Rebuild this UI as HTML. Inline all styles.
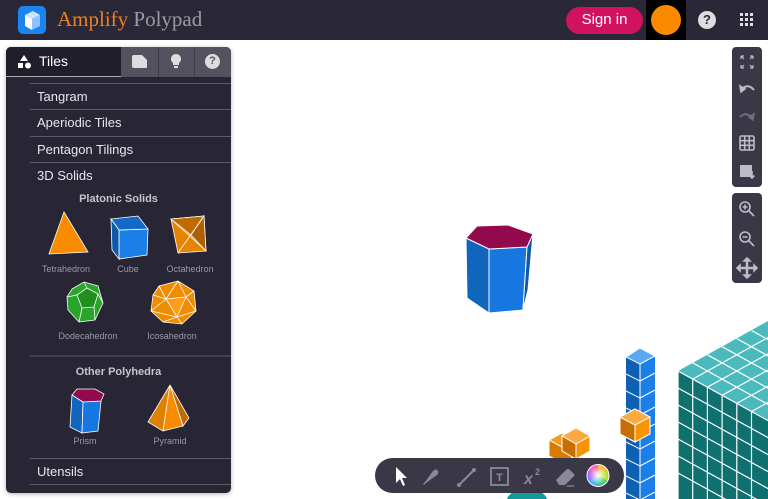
<!DOCTYPE html>
<html><head><meta charset="utf-8"><style>
*{margin:0;padding:0;box-sizing:border-box}
body{width:768px;height:499px;overflow:hidden;background:#fff;font-family:"Liberation Sans",sans-serif;position:relative}
.hdr{position:absolute;left:0;top:0;width:768px;height:40px;background:#2a2837}
.panel{position:absolute;left:6px;top:47px;width:225px;height:446px;background:#282635;border-radius:5px;overflow:hidden;box-shadow:0 1px 4px rgba(0,0,0,.3)}
.item{position:absolute;left:24px;width:201px;border-top:1px solid #5d5b6a;color:#e6e6ea;font-size:13px;padding-left:7px;height:26px;line-height:25px}
.lbl{position:absolute;color:#9a99a5;font-size:9px;text-align:center;width:80px}
.sub{position:absolute;color:#c6c5cc;font-size:11px;font-weight:bold;width:225px;text-align:center}
.tb{position:absolute;left:732px;width:30px;background:#3a3847;border-radius:4px}
</style></head><body>
<div class="hdr">
 <svg style="position:absolute;left:18px;top:6px" width="28" height="28" viewBox="0 0 28 28"><rect width="28" height="28" rx="5" fill="#1a84f0"/><path d="M7 9 L15 5 L22 9 L14 13Z" fill="#cfe3ff"/><path d="M7 9 L14 13 L14 24 L7 20Z" fill="#ffffff"/><path d="M14 13 L22 9 L22 20 L14 24Z" fill="#8fc2ff"/></svg>
 <div style="position:absolute;left:57px;top:7px;font-family:'Liberation Serif',serif;font-size:21px;color:#f07f1c">Amplify <span style="color:#9c9ba3">Polypad</span></div>
 <div style="position:absolute;left:566px;top:7px;width:77px;height:27px;border-radius:14px;background:#d1125f;color:#fff;font-size:15px;text-align:center;line-height:26px">Sign in</div>
 <div style="position:absolute;left:646px;top:0;width:40px;height:40px;background:#000"><div style="position:absolute;left:5px;top:5px;width:30px;height:30px;border-radius:50%;background:#fb8a00"></div></div>
 <div style="position:absolute;left:698px;top:11px;width:18px;height:18px;border-radius:50%;background:#ddd;color:#2a2837;font-weight:bold;font-size:13px;text-align:center;line-height:18px">?</div>
 <svg style="position:absolute;left:740px;top:13px" width="14" height="14"><g fill="#e0e0e0"><rect x="0" y="0" width="3" height="3"/><rect x="5" y="0" width="3" height="3"/><rect x="10" y="0" width="3" height="3"/><rect x="0" y="5" width="3" height="3"/><rect x="5" y="5" width="3" height="3"/><rect x="10" y="5" width="3" height="3"/><rect x="0" y="10" width="3" height="3"/><rect x="5" y="10" width="3" height="3"/><rect x="10" y="10" width="3" height="3"/></g></svg>
</div>

<svg style="position:absolute;left:0;top:0" width="768" height="499">
 <polygon points="678,371 768,321 768,420" fill="#4cb9bc"/>
 <polygon points="678,371 768,420 768,499 678,499" fill="#0e706f"/>
 <g transform="matrix(14.7 8.1 14.7 -8.1 678 371)" stroke="#fff" stroke-width="1.2">
  <line x1="1" y1="0" x2="1" y2="7" vector-effect="non-scaling-stroke"/><line x1="2" y1="0" x2="2" y2="7" vector-effect="non-scaling-stroke"/><line x1="3" y1="0" x2="3" y2="7" vector-effect="non-scaling-stroke"/><line x1="4" y1="0" x2="4" y2="7" vector-effect="non-scaling-stroke"/><line x1="5" y1="0" x2="5" y2="7" vector-effect="non-scaling-stroke"/>
  <line x1="0" y1="1" x2="7" y2="1" vector-effect="non-scaling-stroke"/><line x1="0" y1="2" x2="7" y2="2" vector-effect="non-scaling-stroke"/><line x1="0" y1="3" x2="7" y2="3" vector-effect="non-scaling-stroke"/><line x1="0" y1="4" x2="7" y2="4" vector-effect="non-scaling-stroke"/><line x1="0" y1="5" x2="7" y2="5" vector-effect="non-scaling-stroke"/>
 </g>
 <g transform="matrix(14.7 8.1 0 17 678 371)" stroke="#fff">
  <line x1="0" y1="0" x2="0" y2="8" stroke-width="1.2" vector-effect="non-scaling-stroke"/>
  <line x1="1" y1="0" x2="1" y2="8" stroke-width="1.2" vector-effect="non-scaling-stroke"/><line x1="2" y1="0" x2="2" y2="8" stroke-width="1.2" vector-effect="non-scaling-stroke"/><line x1="3" y1="0" x2="3" y2="8" stroke-width="1.2" vector-effect="non-scaling-stroke"/><line x1="4" y1="0" x2="4" y2="8" stroke-width="1.2" vector-effect="non-scaling-stroke"/><line x1="5" y1="0" x2="5" y2="8" stroke-width="1.2" vector-effect="non-scaling-stroke"/>
  <line x1="0" y1="0" x2="7" y2="0" stroke-width="1.2" vector-effect="non-scaling-stroke"/><line x1="0" y1="1" x2="7" y2="1" stroke-width="1.2" vector-effect="non-scaling-stroke"/><line x1="0" y1="2" x2="7" y2="2" stroke-width="1.2" vector-effect="non-scaling-stroke"/><line x1="0" y1="3" x2="7" y2="3" stroke-width="1.2" vector-effect="non-scaling-stroke"/><line x1="0" y1="4" x2="7" y2="4" stroke-width="1.2" vector-effect="non-scaling-stroke"/><line x1="0" y1="5" x2="7" y2="5" stroke-width="1.2" vector-effect="non-scaling-stroke"/><line x1="0" y1="6" x2="7" y2="6" stroke-width="1.2" vector-effect="non-scaling-stroke"/>
 </g>
 <polygon points="626,357 640,364 640,499 626,499" fill="#0f5fb3"/>
 <polygon points="640,364 655,356 655,499 640,499" fill="#1a7fe8"/>
 <polygon points="626,357 640,348 655,356 640,364" fill="#5aa8f2" stroke="#fff" stroke-width="1"/>
 <g stroke="#fff" stroke-width="1" fill="none">
  <line x1="640" y1="364" x2="640" y2="499"/>
  <path d="M626,374 L640,381 L655,373 M626,391 L640,398 L655,390 M626,408 L640,415 L655,407 M626,425 L640,432 L655,424 M626,442 L640,449 L655,441 M626,459 L640,466 L655,458 M626,476 L640,483 L655,475 M626,493 L640,500 L655,492"/>
 </g>
 <g stroke="#fff" stroke-width="1">
  <polygon points="549,440 562,433 575,440 575,456 562,463 549,456" fill="#d87a00"/>
  <polygon points="549,440 562,433 575,440 562,447" fill="#f59a20"/>
  <polygon points="562,436 576,428 590,436 590,451 576,459 562,451" fill="#f99300"/>
  <polygon points="562,436 576,428 590,436 576,444" fill="#fba940"/>
  <polygon points="562,436 576,444 576,459 562,451" fill="#c86e00"/>
  <polygon points="620,417 635,409 650,417 650,434 635,442 620,434" fill="#f99300"/>
  <polygon points="620,417 635,409 650,417 635,425" fill="#fba940"/>
  <polygon points="620,417 635,425 635,442 620,434" fill="#c86e00"/>
 </g>
 <polygon points="466,238 467,298 489,313 489,249" fill="#1065bd" stroke="#fff" stroke-width="1"/>
 <polygon points="489,249 489,313 523,310 527,247" fill="#1677e0" stroke="#fff" stroke-width="1"/>
 <polygon points="527,247 533,234 528,290 523,310" fill="#0f5aa8" stroke="#fff" stroke-width="1"/>
 <polygon points="466,238 477,226 508,225 533,234 527,247 489,249" fill="#930a4c" stroke="#fff" stroke-width="1"/>
 <path d="M507,499 Q510,490 527,489 Q544,490 547,499Z" fill="#139a99"/>
</svg>

<div class="panel">
 <div style="position:absolute;left:0;top:0;width:115px;height:30px;border-bottom:1px solid #aaa;background:#201e2b"></div>
 <svg style="position:absolute;left:11px;top:8px" width="15" height="14"><polygon points="7,0 11,6 3,6" fill="#fff"/><rect x="1" y="8" width="5" height="5" fill="#fff"/><circle cx="11" cy="10.5" r="3" fill="#fff"/></svg>
 <div style="position:absolute;left:33px;top:6px;color:#fff;font-size:14px">Tiles</div>
 <div style="position:absolute;left:115px;top:0;width:110px;height:30px;background:#54525f"></div>
 <div style="position:absolute;left:152px;top:0;width:1px;height:30px;background:#3e3c49"></div>
 <div style="position:absolute;left:188px;top:0;width:1px;height:30px;background:#3e3c49"></div>
 <svg style="position:absolute;left:126px;top:8px" width="16" height="14"><path d="M0 2 Q0 0 2 0 L10 0 L15 5 L15 12 Q15 13 13 13 L2 13 Q0 13 0 11Z" fill="#ddd"/></svg>
 <svg style="position:absolute;left:164px;top:7px" width="12" height="16"><path d="M6 0 A5 5 0 0 1 9 9 L9 11 L3 11 L3 9 A5 5 0 0 1 6 0Z M4 12 L8 12 L8 14 L4 14Z" fill="#ddd"/></svg>
 <div style="position:absolute;left:199px;top:7px;width:15px;height:15px;border-radius:50%;background:#ddd;color:#54525f;font-weight:bold;font-size:11px;text-align:center;line-height:15px">?</div>
 <div class="item" style="top:36px">Tangram</div>
 <div class="item" style="top:62px">Aperiodic Tiles</div>
 <div class="item" style="top:89px">Pentagon Tilings</div>
 <div class="item" style="top:115px">3D Solids</div>
 <div class="sub" style="top:146px">Platonic Solids</div>
 <svg style="position:absolute;left:0;top:160px" width="225" height="240">
  <g stroke="#fff" stroke-width="0.8">
   <polygon points="58,5 82,45 43,47" fill="#f98b00"/>
   <polygon points="113,23 142,22 141,48 113,52" fill="#1a7fe8"/>
   <polygon points="105,12 132,9 142,22 113,23" fill="#1368c8"/>
   <polygon points="105,12 113,23 113,52 106,43" fill="#0f5aa8"/>
   <polygon points="165,12 198,9 200,44 172,46" fill="#e68400"/>
   <polygon points="165,12 198,9 185,28" fill="#c06a00"/>
   <polygon points="198,9 200,44 185,28" fill="#b06000"/>
   <line x1="165" y1="12" x2="200" y2="44"/><line x1="198" y1="9" x2="172" y2="46"/>
   <polygon points="66,82 78,75 92,79 97,96 89,113 73,115 62,103 61,90" fill="#2aa52a"/>
   <polygon points="71,88 81,81 92,87 88,100 76,101" fill="#1f8f1f"/>
   <line x1="71" y1="88" x2="61" y2="90"/><line x1="81" y1="81" x2="78" y2="75"/><line x1="92" y1="87" x2="97" y2="96"/><line x1="88" y1="100" x2="89" y2="113"/><line x1="76" y1="101" x2="73" y2="115"/>
   <polygon points="153,79 172,74 188,84 190,104 176,117 157,115 145,104 147,88" fill="#f08c00"/>
   <polygon points="160,92 180,90 171,110" fill="#ff9c1a"/>
   <line x1="160" y1="92" x2="153" y2="79"/><line x1="160" y1="92" x2="172" y2="74"/><line x1="180" y1="90" x2="172" y2="74"/><line x1="180" y1="90" x2="188" y2="84"/><line x1="180" y1="90" x2="190" y2="104"/><line x1="171" y1="110" x2="190" y2="104"/><line x1="171" y1="110" x2="176" y2="117"/><line x1="171" y1="110" x2="157" y2="115"/><line x1="171" y1="110" x2="145" y2="104"/><line x1="160" y1="92" x2="145" y2="104"/><line x1="160" y1="92" x2="147" y2="88"/>
  </g>
  <line x1="24" y1="149" x2="225" y2="149" stroke="#5d5b6a"/>
  <g stroke="#fff" stroke-width="0.8">
   <polygon points="66,188 77,195 76,226 64,220" fill="#1065bd"/>
   <polygon points="77,195 95,194 92,224 76,226" fill="#1677e0"/>
   <polygon points="66,188 71,182 89,182 98,187 95,194 77,195" fill="#930a4c"/>
   <polygon points="164,178 142,215 157,224" fill="#e08000"/>
   <polygon points="164,178 157,224 177,219" fill="#f98b00"/>
   <polygon points="164,178 177,219 183,211" fill="#c06a00"/>
  </g>
 </svg>
 <div class="lbl" style="left:20px;top:217px">Tetrahedron</div>
 <div class="lbl" style="left:82px;top:217px">Cube</div>
 <div class="lbl" style="left:144px;top:217px">Octahedron</div>
 <div class="lbl" style="left:42px;top:284px">Dodecahedron</div>
 <div class="lbl" style="left:126px;top:284px">Icosahedron</div>
 <div class="sub" style="top:319px">Other Polyhedra</div>
 <div class="lbl" style="left:39px;top:389px">Prism</div>
 <div class="lbl" style="left:124px;top:389px">Pyramid</div>
 <div class="item" style="top:411px;font-size:13px">Utensils</div>
 <div style="position:absolute;left:24px;top:437px;width:201px;border-top:1px solid #5d5b6a"></div>
</div>

<div class="tb" style="top:47px;height:140px"></div>
<div class="tb" style="top:193px;height:90px"></div>
<svg style="position:absolute;left:732px;top:47px" width="30" height="240" fill="none" stroke="#bdbcc4" stroke-width="1.6">
 <path d="M9 9 L12 12 M9 9 L9 12 M9 9 L12 9 M21 9 L18 12 M21 9 L21 12 M21 9 L18 9 M9 21 L12 18 M9 21 L9 18 M9 21 L12 21 M21 21 L18 18 M21 21 L21 18 M21 21 L18 21" stroke-width="1.2"/>
 <path d="M10 42 Q16 36 22 43" stroke-width="2"/><path d="M8 39 L9 45 L13 42Z" fill="#bdbcc4"/>
 <path d="M8 70 Q14 64 20 71" stroke="#6f6d7b" stroke-width="2"/><path d="M22 67 L21 73 L17 70Z" fill="#6f6d7b" stroke="#6f6d7b"/>
 <rect x="8" y="89" width="14" height="14" rx="1.5"/><path d="M12.7 89 V103 M17.3 89 V103 M8 93.7 H22 M8 98.3 H22"/>
 <rect x="8" y="118" width="12" height="12" fill="#bdbcc4" stroke="none"/><path d="M20 124 V131 M17.5 128.5 L20 131 L22.5 128.5"/>
 <circle cx="13" cy="160" r="5"/><path d="M17 164 L22 169 M13 157.5 V162.5 M10.5 160 H15.5"/>
 <circle cx="13" cy="190" r="5"/><path d="M17 194 L22 199 M10.5 190 H15.5"/>
 <path d="M15 213 L15 229 M7 221 L23 221" stroke-width="2.5"/><path d="M15 211 L18 214 L12 214Z M15 231 L18 228 L12 228Z M5 221 L8 218 L8 224Z M25 221 L22 218 L22 224Z" fill="#bdbcc4"/>
</svg>

<div style="position:absolute;left:375px;top:458px;width:249px;height:35px;border-radius:18px;background:#3a3847"></div>
<svg style="position:absolute;left:375px;top:458px" width="249" height="35">
 <path d="M21 9 L21 25 L25 21 L28 28 L30 27 L27 20 L32 20Z" fill="#fff"/>
 <path d="M51 25 L49 27 L48 26 L50 24 L58 13 Q61 10 63 13 Q64 15 62 17Z" fill="#8a8995"/>
 <path d="M84 27 L99 12" stroke="#8a8995" stroke-width="2"/><circle cx="84" cy="27" r="2" fill="#8a8995"/><circle cx="99" cy="12" r="2" fill="#8a8995"/>
 <rect x="116" y="10" width="17" height="17" fill="none" stroke="#8a8995" stroke-width="1.8"/>
 <text x="124.5" y="23" fill="#8a8995" font-size="11" font-weight="bold" text-anchor="middle" font-family="Liberation Sans">T</text>
 <text x="149" y="26" fill="#8a8995" font-size="16" font-weight="bold" font-style="italic" font-family="Liberation Sans">x</text>
 <text x="160" y="17" fill="#8a8995" font-size="9" font-weight="bold" font-family="Liberation Sans">2</text>
 <path d="M181 22 L191 12 Q193 10 195 12 L199 16 Q200 18 198 19 L190 27 L184 27Z" fill="#8a8995"/><path d="M192 28 H199" stroke="#8a8995" stroke-width="1.2"/>
 <defs><radialGradient id="w" cx="50%" cy="50%" r="50%"><stop offset="0" stop-color="#fff"/><stop offset="1" stop-color="#fff" stop-opacity="0"/></radialGradient></defs>
 <circle cx="223" cy="17.5" r="11" fill="#f44"/>
 <path d="M223 17.5 L223 6.5 A11 11 0 0 1 232.5 12Z" fill="#ffb000"/>
 <path d="M223 17.5 L232.5 12 A11 11 0 0 1 232.5 23Z" fill="#9be000"/>
 <path d="M223 17.5 L232.5 23 A11 11 0 0 1 223 28.5Z" fill="#20c060"/>
 <path d="M223 17.5 L223 28.5 A11 11 0 0 1 213.5 23Z" fill="#20a0ff"/>
 <path d="M223 17.5 L213.5 23 A11 11 0 0 1 213.5 12Z" fill="#9050ff"/>
 <path d="M223 17.5 L213.5 12 A11 11 0 0 1 223 6.5Z" fill="#ff40b0"/>
 <circle cx="223" cy="17.5" r="11" fill="url(#w)" stroke="#fff" stroke-width="1"/>
</svg>
</body></html>
